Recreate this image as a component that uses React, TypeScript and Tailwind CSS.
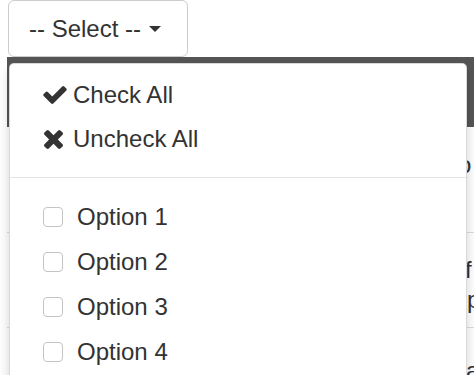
import React from 'react';

const OPTIONS = ['Option 1', 'Option 2', 'Option 3', 'Option 4'];

function CheckIcon() {
  return (
    <svg viewBox="121 334 1550 1188" width="24" height="18" aria-hidden="true">
      <path
        fill="#333"
        d="M1671 566q0 40-28 68l-724 724-136 136q-28 28-68 28t-68-28l-136-136-362-362q-28-28-28-68t28-68l136-136q28-28 68-28t68 28l294 295 656-657q28-28 68-28t68 28l136 136q28 28 28 68z"
      />
    </svg>
  );
}

function TimesIcon() {
  return (
    <svg viewBox="89 166 1188 1188" width="19" height="19" aria-hidden="true">
      <path
        fill="#333"
        d="M1277 1122q0 40-28 68l-136 136q-28 28-68 28t-68-28l-294-294-294 294q-28 28-68 28t-68-28l-136-136q-28-28-28-68t28-68l294-294-294-294q-28-28-28-68t28-68l136-136q28-28 68-28t68 28l294 294 294-294q28-28 68-28t68 28l136 136q28 28 28 68t-28 68l-294 294 294 294q28 28 28 68z"
      />
    </svg>
  );
}

export default function App() {
  return (
    <div className="relative w-[474px] h-[375px] overflow-hidden bg-white text-[#333] font-['Liberation_Sans',Arial,sans-serif]">
      {/* Toggle button */}
      <div className="pl-[8px]">
        <button className="flex items-center h-[57px] w-[180px] pl-[20px] pr-[22px] gap-[8px] bg-white border border-[#ccc] rounded-[6px] text-[24px] leading-none text-[#333]">
          <span>-- Select --</span>
          <span className="w-0 h-0 border-l-[6px] border-r-[6px] border-t-[6px] border-l-transparent border-r-transparent border-t-[#333]" />
        </button>
      </div>

      {/* Table behind the menu */}
      <div className="ml-[7px] text-[24px]">
        <div className="h-[70px] bg-[#555]" />
        <div className="h-[106px] border-b border-[#ddd] pt-[21px] pl-[451px] leading-[34px]">o</div>
        <div className="h-[95px] border-b border-[#ddd] pt-[22px] leading-[30px]">
          <div className="pl-[458px]">f</div>
          <div className="pl-[460px]">p</div>
        </div>
        <div className="pt-[28px] pl-[459px] leading-[30px]">a</div>
      </div>

      {/* Dropdown menu */}
      <div className="absolute left-[9px] top-[63px] w-[458px] h-[340px] bg-white border border-[rgba(0,0,0,0.15)] rounded-[5px] shadow-[0_6px_12px_rgba(0,0,0,0.175)] pt-[9px] text-[24px]">
        <div className="flex items-center h-[44px] pl-[33px]">
          <span className="w-[30px] flex items-center">
            <CheckIcon />
          </span>
          <span>Check All</span>
        </div>
        <div className="flex items-center h-[44px] pl-[33px]">
          <span className="w-[30px] flex items-center pl-[1px]">
            <TimesIcon />
          </span>
          <span>Uncheck All</span>
        </div>

        <div className="my-[16px] h-px bg-[#e5e5e5]" />

        {OPTIONS.map(opt => (
          <label key={opt} className="flex items-center h-[45px] pl-[33px] gap-[14px]">
            <span className="w-[20px] h-[20px] rounded-[4px] border border-[#c4c4c4] bg-white" />
            <span>{opt}</span>
          </label>
        ))}
      </div>
    </div>
  );
}
